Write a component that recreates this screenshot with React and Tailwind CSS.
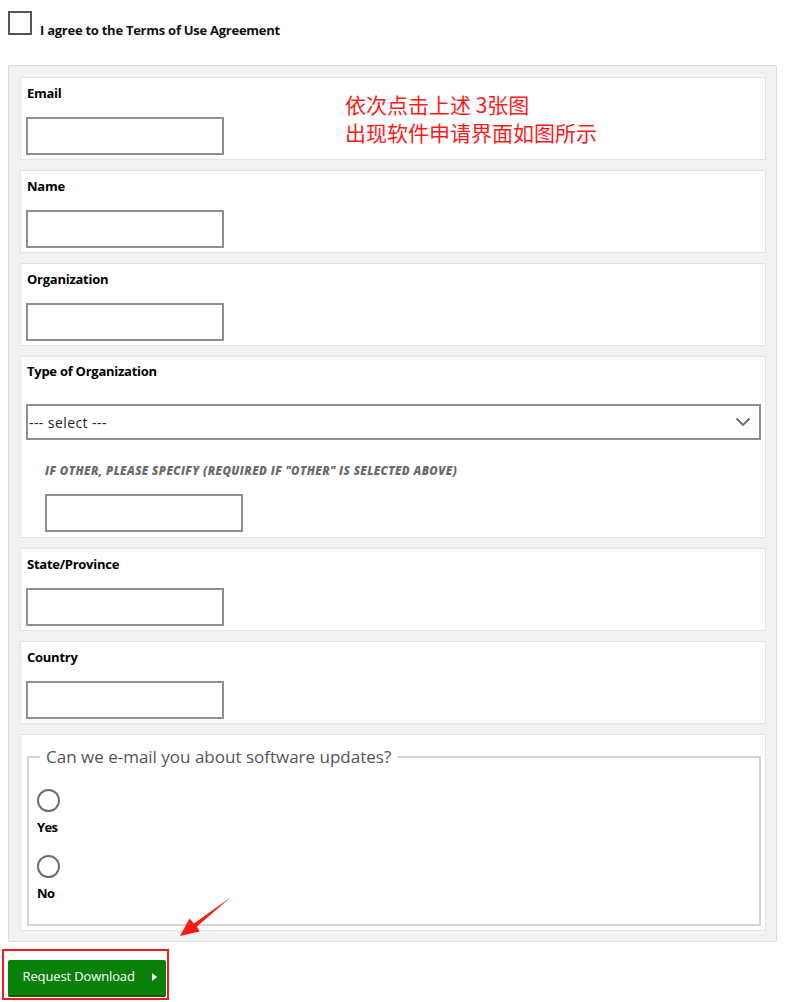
import React from 'react';

const font = { fontFamily: '"Open Sans", "Noto Sans CJK SC", sans-serif' };

// Plain text field box used in every card
const Field = ({ className = '' }) => (
  <div className={`w-[198px] h-[38px] border-2 border-[#8f8f8f] bg-white ${className}`} />
);

const Label = ({ children }) => (
  <div className="text-[13px] leading-[16px] font-bold text-black tracking-[-0.02em]">{children}</div>
);

const SimpleCard = ({ label }) => (
  <div className="bg-white border border-[#e3e3e3] pt-[7px] pb-[4px] pl-[5px]">
    <div className="pl-[1px]">
      <Label>{label}</Label>
    </div>
    <Field className="mt-[16px]" />
  </div>
);

const Radio = ({ label, first }) => (
  <div className={first ? 'mt-[21px]' : 'mt-[20px]'}>
    <div className="w-[23px] h-[23px] rounded-full border-2 border-[#6e6e6e] bg-white" />
    <div className="mt-[7px] text-[13px] leading-[16px] font-bold tracking-[-0.05em] text-black">{label}</div>
  </div>
);

export default function App() {
  return (
    <div className="relative w-[801px] h-[1002px] bg-white overflow-hidden" style={font}>
      {/* terms checkbox */}
      <div className="flex items-start pt-[11px] pl-[8px]">
        <div className="w-[24px] h-[24px] border-2 border-[#555]" />
        <div className="ml-[8px] pt-[11px] text-[13px] leading-[16px] font-bold text-[#111] tracking-[-0.02em]">
          I agree to the Terms of Use Agreement
        </div>
      </div>

      {/* form panel */}
      <div className="mt-[27px] ml-[8px] w-[769px] bg-[#f2f2f2] border border-[#dcdcdc] rounded-[2px] pt-[11px] pl-[11px] pr-[10px] pb-[10px] flex flex-col gap-[10px]">
        <SimpleCard label="Email" />
        <SimpleCard label="Name" />
        <SimpleCard label="Organization" />

        <div className="bg-white border border-[#e3e3e3] pt-[6px] pb-[5px] pl-[5px]">
          <div className="pl-[1px]">
            <Label>Type of Organization</Label>
          </div>
          <div className="mt-[25px] w-[735px] h-[36px] border-2 border-[#8f8f8f] flex items-center justify-between pl-[1px] pr-[8px]">
            <span className="text-[14px] text-[#222] tracking-[0.03em]">--- select ---</span>
            <svg width="16" height="10" viewBox="0 0 16 10" fill="none">
              <path d="M1.5 1.5 L8 8 L14.5 1.5" stroke="#6a6a6a" strokeWidth="1.8" />
            </svg>
          </div>
          <div className="mt-[24px] pl-[19px] text-[11.5px] leading-[14px] font-extrabold italic uppercase text-[#6b6b6b] tracking-[0.035em]">
            If other, please specify (required if "other" is selected above)
          </div>
          <Field className="mt-[16px] ml-[19px]" />
        </div>

        <SimpleCard label="State/Province" />
        <SimpleCard label="Country" />

        <div className="bg-white border border-[#e3e3e3] pt-[11px] pb-[4px] pl-[6px] pr-[4px]">
          <fieldset className="border-2 border-[#d4d4d4] pl-[8px] pb-[23px]">
            <legend className="ml-[3px] px-[6px] text-[17px] leading-[22px] text-[#555]">
              Can we e-mail you about software updates?
            </legend>
            <Radio label="Yes" first />
            <Radio label="No" />
          </fieldset>
        </div>
      </div>

      {/* highlighted submit */}
      <div className="mt-[7px] ml-[2px] w-[167px] h-[51px] border-[2.5px] border-[#f21b1b] pl-[3.5px] pt-[8.5px]">
        <button className="w-[158px] h-[37px] bg-[#0a7f0a] border-b-2 border-[#056005] rounded-[2px] flex items-center pl-[15px] pr-[9px] justify-between text-white">
          <span className="text-[13px] tracking-[-0.01em]">Request Download</span>
          <svg width="5" height="8" viewBox="0 0 5 8"><path d="M0 0 L5 4 L0 8 Z" fill="#fff" /></svg>
        </button>
      </div>

      {/* annotation text */}
      <div className="absolute left-[345px] top-[90px] text-[21px] leading-[28px] text-[#ff1a1a]" style={{ fontFamily: '"Noto Sans CJK SC", sans-serif' }}>
        <div>依次点击上述 3张图</div>
        <div>出现软件申请界面如图所示</div>
      </div>

      {/* annotation arrow */}
      <svg className="absolute left-0 top-0 pointer-events-none" width="801" height="1002">
        <polygon points="231,897 197,926.5 199.5,931.5 180,936 189.5,918.5 194,923.5" fill="#ff1a1a" />
      </svg>
    </div>
  );
}
